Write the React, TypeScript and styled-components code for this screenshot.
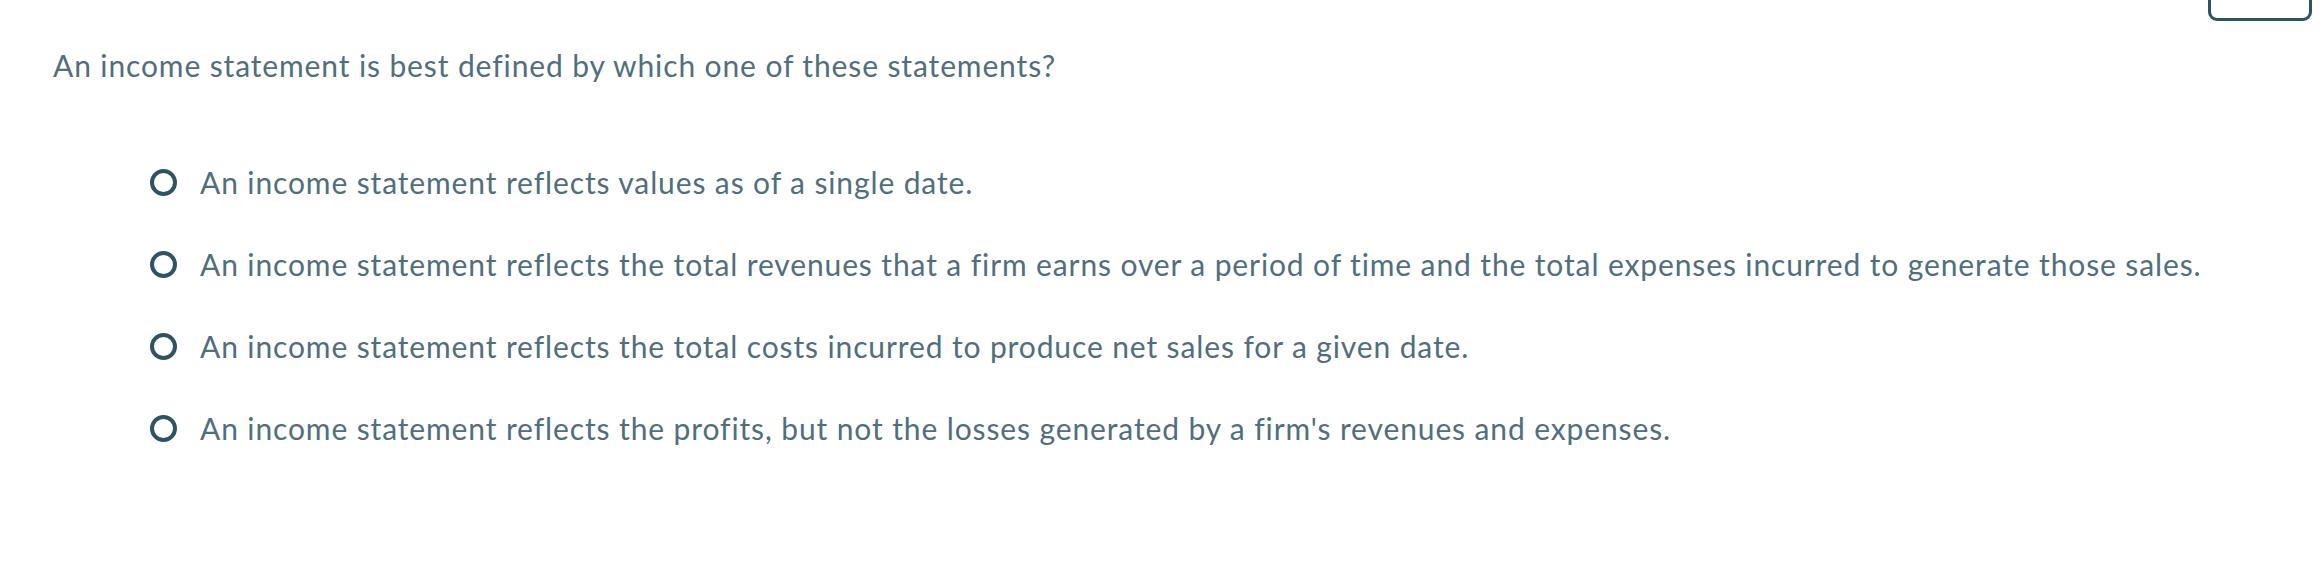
import React from 'react'
import styled, { createGlobalStyle } from 'styled-components'

const options = [
  'An income statement reflects values as of a single date.',
  'An income statement reflects the total revenues that a firm earns over a period of time and the total expenses incurred to generate those sales.',
  'An income statement reflects the total costs incurred to produce net sales for a given date.',
  "An income statement reflects the profits, but not the losses generated by a firm's revenues and expenses.",
]

const GlobalStyle = createGlobalStyle`
  html, body {
    margin: 0;
    padding: 0;
    background: #ffffff;
  }
  body {
    font-family: Lato, 'Liberation Sans', sans-serif;
    font-variant-ligatures: none;
    overflow: hidden;
  }
`

const Page = styled.div`
  width: 2322px;
  height: 582px;
  box-sizing: border-box;
  padding: 0 10px 0 53px;
  display: flex;
  flex-direction: column;
  background: #ffffff;
`

const TopBar = styled.div`
  display: flex;
  justify-content: flex-end;
  height: 21px;
`

const CornerButton = styled.button`
  width: 104px;
  height: 50px;
  margin-top: -29px;
  border: 3px solid #2f5363;
  border-radius: 9px;
  background: #ffffff;
  padding: 0;
`

const Question = styled.p`
  margin: 26px 0 0;
  font-size: 30px;
  line-height: 36px;
  letter-spacing: 0.88px;
  color: #516e7d;
`

const OptionList = styled.ul`
  list-style: none;
  margin: 81px 0 0;
  padding: 0 0 0 97px;
  display: flex;
  flex-direction: column;
  gap: 46px;
`

const OptionRow = styled.li`
  display: flex;
  align-items: center;
  gap: 23px;
  height: 36px;
`

const Radio = styled.span`
  flex: none;
  width: 27px;
  height: 27px;
  box-sizing: border-box;
  border: 4.5px solid #2f5363;
  border-radius: 50%;
`

const OptionText = styled.span`
  font-size: 30px;
  line-height: 36px;
  letter-spacing: 0.88px;
  color: #516e7d;
  white-space: nowrap;
`

function App() {
  return (
    <>
      <GlobalStyle />
      <Page>
        <TopBar>
          <CornerButton aria-label="menu" />
        </TopBar>
        <Question>
          An income statement is best defined by which one of these statements?
        </Question>
        <OptionList>
          {options.map((o) => (
            <OptionRow key={o}>
              <Radio />
              <OptionText>{o}</OptionText>
            </OptionRow>
          ))}
        </OptionList>
      </Page>
    </>
  )
}

export default App
